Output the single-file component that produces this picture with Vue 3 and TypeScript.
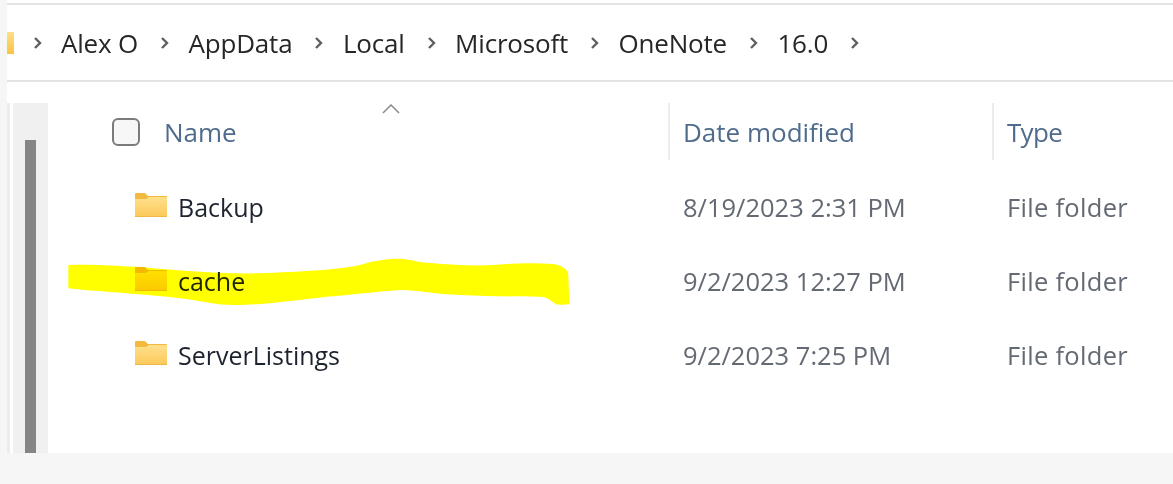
<script setup lang="ts">
import { ref } from "vue";

const crumbs = ref(["Alex O", "AppData", "Local", "Microsoft", "OneNote", "16.0"]);

const rows = ref([
  { name: "Backup", date: "8/19/2023 2:31 PM", type: "File folder" },
  { name: "cache", date: "9/2/2023 12:27 PM", type: "File folder" },
  { name: "ServerListings", date: "9/2/2023 7:25 PM", type: "File folder" },
]);
</script>

<template>
  <div class="page">
    <div class="window">
      <div class="crumbs">
        <span class="crumb-folder"></span>
        <svg class="chevron" viewBox="0 0 10 14" width="10" height="14">
          <path d="M2 2l5 5-5 5" />
        </svg>
        <template v-for="crumb in crumbs" :key="crumb">
          <span class="crumb">{{ crumb }}</span>
          <svg class="chevron" viewBox="0 0 10 14" width="10" height="14">
            <path d="M2 2l5 5-5 5" />
          </svg>
        </template>
      </div>

      <div class="body">
        <div class="side">
          <div class="scroll-track">
            <div class="scroll-thumb"></div>
          </div>
        </div>

        <div class="list">
          <svg class="sort-arrow" viewBox="0 0 18 10" width="18" height="10">
            <path d="M1 9l8-8 8 8" />
          </svg>
          <div class="head">
            <div class="col-name head-name">
              <span class="checkbox"></span>
              <span>Name</span>
            </div>
            <div class="col-date head-cell">Date modified</div>
            <div class="col-type head-cell">Type</div>
          </div>

          <div class="rows">
            <div v-for="row in rows" :key="row.name" class="row">
              <div class="col-name cell-name">
                <svg class="folder" viewBox="0 0 32 24" width="32" height="24">
                  <defs>
                    <linearGradient id="folderFill" x1="0" y1="0" x2="0" y2="1">
                      <stop offset="0" stop-color="#ffe08c" />
                      <stop offset="1" stop-color="#fbc95a" />
                    </linearGradient>
                  </defs>
                  <path d="M0 1a1 1 0 0 1 1-1h9l3 3h18a1 1 0 0 1 1 1v3H0z" fill="#f4b93f" />
                  <path d="M0 6h11l3-2h17a1 1 0 0 1 1 1v18a1 1 0 0 1-1 1H1a1 1 0 0 1-1-1z" fill="url(#folderFill)" />
                  <rect x="0" y="23" width="32" height="1" fill="#f0b648" />
                </svg>
                <span class="file-name">{{ row.name }}</span>
              </div>
              <div class="col-date cell">{{ row.date }}</div>
              <div class="col-type cell">{{ row.type }}</div>
            </div>
            <svg class="marker" viewBox="0 0 1560 186" width="520" height="62">
              <path
                d="M25 45 C100 42 170 48 225 50 C300 55 450 72 600 70 C720 65 830 60 900 45 C950 30 1000 25 1030 27 C1060 30 1080 38 1100 38 C1180 45 1250 48 1300 45 C1370 38 1430 40 1480 42 C1510 48 1525 60 1525 75 L1528 163 C1510 165 1495 165 1488 163 C1470 150 1460 140 1440 140 C1350 140 1280 138 1200 135 C1120 132 1060 118 1020 120 C950 125 870 135 800 140 C700 152 600 165 520 165 C470 165 430 155 400 150 C330 140 260 135 200 130 C130 125 70 120 25 115 Z"
              />
            </svg>
          </div>
        </div>
      </div>
    </div>
  </div>
</template>

<style scoped>
.page {
  width: 1173px;
  height: 484px;
  background: #f6f6f6;
  padding-left: 7px;
  box-sizing: border-box;
  overflow: hidden;
  font-family: "Open Sans", "Noto Sans", sans-serif;
}

.window {
  width: 1166px;
  height: 453px;
  background: #fff;
  display: flex;
  flex-direction: column;
  overflow: hidden;
  filter: blur(0.5px);
}

.crumbs {
  height: 79px;
  margin-top: 3px;
  border-top: 2px solid #e3e3e3;
  border-bottom: 2px solid #e3e3e3;
  display: flex;
  align-items: center;
  box-sizing: border-box;
  flex-shrink: 0;
  color: #262626;
  font-size: 26px;
  letter-spacing: -0.2px;
}

.crumb-folder {
  width: 7px;
  height: 22px;
  margin-right: -3.5px;
  background: linear-gradient(#ffdf8a, #f9c440);
}

.chevron {
  margin: 0 18.5px 0 22px;
  flex-shrink: 0;
  fill: none;
  stroke: #5f5f5f;
  stroke-width: 2.4;
}

.crumb {
  white-space: nowrap;
}

.body {
  flex: 1;
  display: flex;
  padding-top: 21px;
  min-height: 0;
}

.side {
  width: 43px;
  padding-left: 3px;
  border-left: 3px solid #ececec;
  flex-shrink: 0;
  box-sizing: border-box;
}

.scroll-track {
  width: 35px;
  height: 100%;
  background: #f0f0f0;
  padding: 37px 0 0 12px;
  box-sizing: border-box;
}

.scroll-thumb {
  width: 11px;
  height: 100%;
  background: #858585;
}

.list {
  position: relative;
  flex: 1;
  min-width: 0;
}

.sort-arrow {
  position: absolute;
  left: 332px;
  top: 1px;
  fill: none;
  stroke: #8a8a8a;
  stroke-width: 1.5;
}

.head {
  display: flex;
  height: 57px;
  align-items: center;
  color: #4f6c8c;
  font-size: 26px;
}

.col-name {
  width: 618px;
  flex-shrink: 0;
  box-sizing: border-box;
  display: flex;
  align-items: center;
}

.col-date {
  width: 324px;
  flex-shrink: 0;
  padding-left: 15px;
  box-sizing: border-box;
}

.col-type {
  flex: 1;
  padding-left: 15px;
}

.head-name {
  padding-left: 62px;
  gap: 24px;
}

.head-cell {
  height: 100%;
  display: flex;
  align-items: center;
  border-left: 2px solid #ececec;
  padding-left: 13px;
}

.head-cell.col-type {
  letter-spacing: -0.7px;
}

.checkbox {
  width: 28px;
  height: 28px;
  border: 2px solid #7b7b7b;
  border-radius: 6px;
  background: #f7f7f7;
  box-sizing: border-box;
}

.rows {
  position: relative;
  display: flex;
  flex-direction: column;
  padding-top: 10px;
}

.row {
  display: flex;
  align-items: center;
  height: 74px;
}

.cell-name {
  padding-left: 85px;
  gap: 11px;
}

.folder {
  flex-shrink: 0;
  margin-bottom: 4px;
}

.file-name {
  color: #1d2430;
  font-size: 25px;
}

.cell {
  color: #646a73;
  font-size: 25.5px;
}

.cell.col-type {
  letter-spacing: 0.3px;
}

.marker {
  position: absolute;
  left: 10px;
  top: 90px;
  fill: #ffff00;
  mix-blend-mode: multiply;
}
</style>

<style>
html,
body {
  margin: 0;
  background: #f6f6f6;
}
</style>
